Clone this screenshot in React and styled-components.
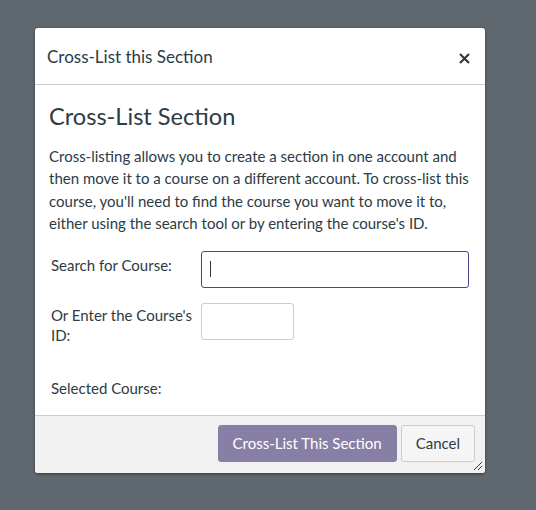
import React from "react";
import styled, { createGlobalStyle } from "styled-components";

const Global = createGlobalStyle`
  html, body { margin: 0; padding: 0; }
  body {
    background: #5f676f;
    font-family: Lato, "Noto Sans", sans-serif;
    color: #2d3b45;
    width: 536px;
    height: 510px;
    overflow: hidden;
  }
`;

const Stage = styled.div`
  padding: 28px 0 0 35px;
`;

const Dialog = styled.div`
  width: 450px;
  height: 445px;
  background: #fff;
  border-radius: 3px;
  box-shadow: 0 1px 3px rgba(0, 0, 0, 0.45);
  display: flex;
  flex-direction: column;
  position: relative;
  overflow: hidden;
`;

const Header = styled.div`
  height: 57px;
  box-sizing: border-box;
  border-bottom: 1px solid #c7cdd1;
  display: flex;
  align-items: center;
  justify-content: space-between;
  padding: 0 14px 0 12px;
`;

const Title = styled.h1`
  margin: 0;
  font-size: 17px;
  font-weight: 400;
  color: #2d3b45;
`;

const Close = styled.button`
  border: 0;
  background: none;
  padding: 0;
  width: 14px;
  height: 14px;
  display: flex;
  align-items: center;
  justify-content: center;
  margin-top: 4px;
`;

const Body = styled.div`
  flex: 1;
  padding: 13px 14px 0 14px;
`;

const Heading = styled.h2`
  margin: 0 0 11px;
  font-size: 23.6px;
  font-weight: 400;
  line-height: 36px;
  color: #2d3b45;
`;

const Para = styled.p`
  margin: 0 0 16px;
  font-size: 15px;
  line-height: 22.4px;
  color: #2d3b45;
`;

const Form = styled.div`
  display: grid;
  grid-template-columns: 150px 1fr;
  row-gap: 15px;
  padding-left: 2px;
  padding-right: 2px;
`;

const Label = styled.label`
  font-size: 15px;
  line-height: 20px;
  padding-top: ${(p) => p.$pt || 6}px;
  color: #2d3b45;
`;

const Input = styled.div`
  box-sizing: border-box;
  height: 37px;
  width: ${(p) => p.$w || "100%"};
  border: 1px solid ${(p) => (p.$focus ? "#5a3f8c" : "#c7cdd1")};
  border-radius: 3px;
  background: #fff;
  display: flex;
  align-items: center;
  padding-left: 8px;
`;

const Caret = styled.span`
  width: 1px;
  height: 16px;
  background: #2d3b45;
`;

const Spacer = styled.div``;

const Footer = styled.div`
  height: 58px;
  box-sizing: border-box;
  border-top: 1px solid #c7cdd1;
  background: #f1f1f1;
  display: flex;
  justify-content: flex-end;
  align-items: flex-start;
  gap: 4px;
  padding: 9px 10px 0 0;
`;

const Button = styled.button`
  height: 37px;
  box-sizing: border-box;
  border-radius: 3px;
  font-family: Lato, "Noto Sans", sans-serif;
  font-size: 15px;
  padding: 0 14px 2px;
  border: 1px solid ${(p) => (p.$primary ? "#887fa6" : "#c7cdd1")};
  background: ${(p) => (p.$primary ? "#887fa6" : "#f5f5f5")};
  color: ${(p) => (p.$primary ? "#fff" : "#2d3b45")};
`;

const Grip = styled.svg`
  position: absolute;
  right: 2px;
  bottom: 2px;
`;

export default function App() {
  return (
    <>
      <Global />
      <Stage>
        <Dialog>
          <Header>
            <Title>Cross-List this Section</Title>
            <Close aria-label="Close">
              <svg width="11" height="11" viewBox="0 0 11 11">
                <path d="M1 1L10 10M10 1L1 10" stroke="#2d3b45" strokeWidth="2.2" />
              </svg>
            </Close>
          </Header>
          <Body>
            <Heading>Cross-List Section</Heading>
            <Para>
              Cross-listing allows you to create a section in one account and then
              move it to a course on a different account. To cross-list this course,
              you'll need to find the course you want to move it to, either using the
              search tool or by entering the course's ID.
            </Para>
            <Form>
              <Label $pt={4}>Search for Course:</Label>
              <Input $focus>
                <Caret />
              </Input>
              <Label $pt={2}>
                Or Enter the Course's
                <br />
                ID:
              </Label>
              <Input $w="93px" />
              <Label $pt={18}>Selected Course:</Label>
              <Spacer />
            </Form>
          </Body>
          <Footer>
            <Button $primary>Cross-List This Section</Button>
            <Button>Cancel</Button>
          </Footer>
          <Grip width="12" height="12" viewBox="0 0 12 12">
            <path d="M11 3L3 11M11 7L7 11" stroke="#2d3b45" strokeWidth="1" />
          </Grip>
        </Dialog>
      </Stage>
    </>
  );
}
